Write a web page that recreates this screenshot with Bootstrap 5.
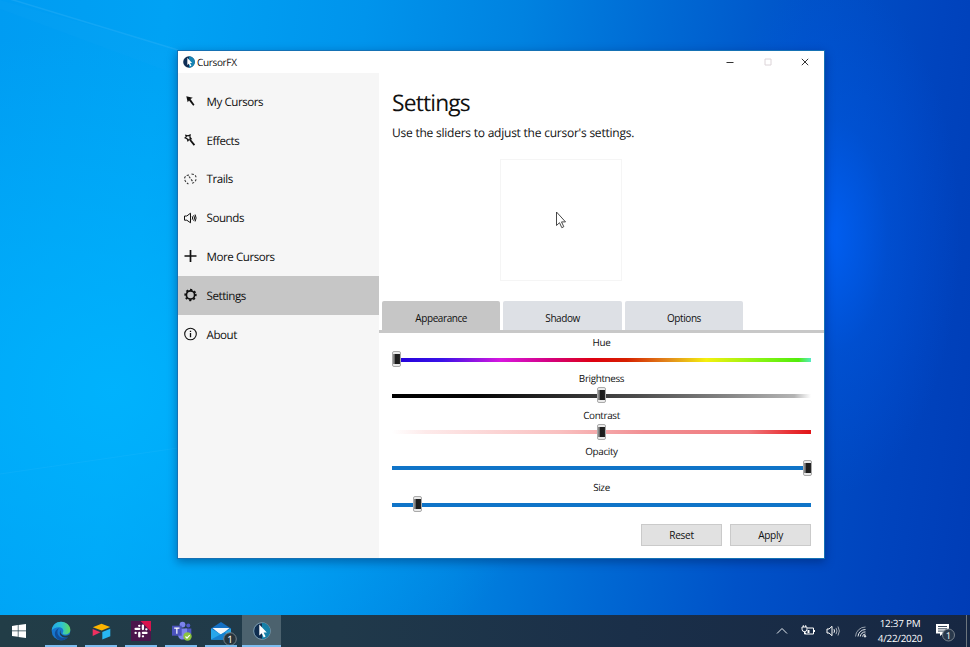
<!DOCTYPE html>
<html lang="en">
<head>
<meta charset="utf-8">
<meta name="viewport" content="width=device-width, initial-scale=1">
<title>CursorFX</title>
<link href="https://cdn.jsdelivr.net/npm/bootstrap@5.3.0/dist/css/bootstrap.min.css" rel="stylesheet">
<style>
body{font-family:"Open Sans","Noto Sans",sans-serif;color:#111;line-height:1.2;text-rendering:geometricPrecision;
background:
radial-gradient(ellipse 130px 260px at 830px 236px,rgba(0,96,246,.9),rgba(0,90,234,.35) 45%,transparent),
radial-gradient(ellipse 460px 360px at 110px 390px,rgba(0,182,255,.8),transparent),
linear-gradient(97deg,#009cf2 0,#00a2f4 16%,#0094ec 35%,#0082e0 50%,#006ad4 63%,#0052c8 77%,#0044be 90%,#003cb6 100%)}
.desktop{height:647px}
.rays{position:absolute;left:0;top:0;z-index:0}
.win{width:648px;height:509px;margin:50px 0 0 177px;border:1px solid #1571b4;box-shadow:0 3px 9px rgba(0,20,70,.4);position:relative;z-index:1}
.titlebar{height:22px;padding-left:5px;font-size:10px;gap:2px}
.titlebar span{letter-spacing:-.34px}
.wbtn{width:37.5px;height:22px}
.side{width:201px;background:#f6f6f6;padding-top:9.3px}
.side .nav-link{height:38.8px;padding:2px 0 0 5px;color:#111;font-size:11.6px;gap:8.5px;letter-spacing:-.45px}
.side .nav-link svg{width:15px;height:15px;flex:none;margin-top:-2px}
.side .nav-link.active{background:#c6c6c6}
.main-head{padding:15px 0 0 13px}
.main-head h1{font-size:22.8px;line-height:28px;font-weight:400;margin:0;letter-spacing:-.83px;padding-top:1px}
.main-head p{font-size:12px;line-height:18px;margin:7px 0 0;letter-spacing:-.23px}
.preview{width:122px;height:122px;border:1px solid #f5f5f5;margin:17px 0 0 121px}
.fx-tabs{margin-top:20px;padding-left:3px;gap:3px;border-bottom:3px solid #c8c8c8}
.fx-tabs .nav-link{width:118.4px;height:29px;padding:5px 0 0;border:0;border-radius:2px 2px 0 0;background:#dde0e5;color:#111;font-size:10px;line-height:24px;letter-spacing:-.42px}
.fx-tabs .nav-link.active{background:#c6c6c6}
.sliders{padding:0 13px}
.srow{height:36.25px;font-size:9.9px;letter-spacing:-.36px}
.srow label{line-height:18px;height:18px}
.strack{height:17px}
.strack i{display:block;height:4px;width:100%}
.thumb{position:absolute;top:0;width:9px;height:16px;border:1px solid #aaa;border-radius:2px;background:linear-gradient(90deg,#999 0,#666 22%,#1b1b1b 36%,#202020 92%,#555 100%) 0 2px/100% 10px no-repeat,#e9e9e9}
.hue{background:linear-gradient(90deg,#2000d8 0,#3a12e8 12%,#d816de 26%,#d4007c 38%,#de0010 48%,#d62000 56%,#e28a1c 66%,#f4f00e 75%,#86f412 88%,#52ec0c 97%,#55ebc5 100%)}
.bri{background:linear-gradient(90deg,#000 0,#050505 20%,#4b4b4b 58%,#858585 80%,#b4b4b4 96%,#fff 100%)}
.con{background:linear-gradient(90deg,#fff 0,#fdeaea 8%,#f9c0c0 40%,#f19094 60%,#f0787c 85%,#e83034 95%,#e01418 100%)}
.solid{background:#0f74c8}
.fx-btn{width:81px;height:22px;padding:0;border:1px solid #cacaca;border-radius:0;background:#e1e1e1;color:#111;font-size:10.1px;line-height:20px;letter-spacing:-.32px}
.actions{padding-top:10px}
.taskbar{height:32px;background:linear-gradient(90deg,#223d47 0,#20394a 35%,#1a2f49 65%,#172742 100%);color:#fff;position:relative;z-index:1}
.tb{height:32px;width:40px;position:relative}
.tb.start{width:41px;padding-right:3px}
.tb.open::after{content:"";position:absolute;left:4px;right:4px;bottom:0;height:2px;background:#7dbdf0}
.tb.current{background:#4c626e;width:39px;margin-left:1px}
.tb.current::after{left:0;right:0}
.tray svg{position:relative;flex:none}
.clock{font-size:9.9px;line-height:15px;width:50px;letter-spacing:-.25px;white-space:nowrap}
</style>
</head>
<body>
<svg class="rays" width="970" height="615" viewBox="0 0 970 615">
<path d="M0 0L178 49V75L0 9V0z" fill="#5cc6ff" opacity=".03"/><path d="M0 -4L178 50" stroke="#7fd0ff" opacity=".14" stroke-width="1.500"/>
<path d="M0 474L178 448" stroke="#7fd8ff" opacity=".07"/>
</svg>
<div class="desktop d-flex flex-column justify-content-between overflow-hidden">
<main class="win bg-white d-flex flex-column">
<header class="titlebar d-flex align-items-center">
<svg width="12" height="12" viewBox="0 0 18 18"><circle cx="9" cy="9" r="8.7" fill="#102e55"/><path d="M9 .3a8.7 8.7 0 010 17.4z" fill="#1684b4"/><path d="M6.5 2.7v10.8l2.3-2 2 4 1.8-.9-2-4h3z" fill="#fff"/></svg>
<span>CursorFX</span>
<div class="d-flex ms-auto">
<div class="wbtn d-flex align-items-center justify-content-center"><svg width="8" height="8"><path d="M.5 4.5h7" stroke="#333"/></svg></div>
<div class="wbtn d-flex align-items-center justify-content-center"><svg width="8" height="8"><path d="M1 1h6v6H1z" fill="none" stroke="#dcd4d8"/></svg></div>
<div class="wbtn d-flex align-items-center justify-content-center"><svg width="8" height="8"><path d="M.8 .8l6.400 6.400M7.200 .8L.8 7.200" stroke="#333"/></svg></div>
</div>
</header>
<div class="d-flex flex-grow-1">
<nav class="side nav flex-column">
<a class="nav-link d-flex align-items-center"><svg viewBox="0 0 15 15"><path d="M3.300 2.200l6.500 1.600-2.300 1.300 4 5.600-1.300 1-4.200-5.300-1.300 1.900z" fill="#111"/></svg>My Cursors</a>
<a class="nav-link d-flex align-items-center"><svg viewBox="0 0 15 15" fill="none" stroke="#111"><path d="M2.800 2.300l2.300.6 2-1-.2 2.300 1.300 1.700-2.100.3-1.200 1.600-.8-2-2-.9 1.200-1z" stroke-width="1.200"/><path d="M6.800 6.500l4.600 5.600" stroke-width="1.800"/></svg>Effects</a>
<a class="nav-link d-flex align-items-center"><svg viewBox="0 0 15 15" fill="none" stroke="#333" stroke-width="1.100"><path d="M6 3C3 3.200 1.300 5 1.600 7s2 4 3.800 5" stroke-dasharray="2.200 1.500"/><path d="M8.500 2c3 .2 4.800 1.600 4.600 4.500s-1.600 4-4 4.800" stroke-dasharray="2.200 1.700"/><path d="M6 4.500l4 5.500" stroke-dasharray="2.200 1.400"/></svg>Trails</a>
<a class="nav-link d-flex align-items-center"><svg viewBox="0 0 15 15" fill="none" stroke="#111" stroke-width="1"><path d="M1.500 5h2.300L7.500 2.200v9.600L3.800 9.200H1.500z"/><path d="M9.200 5.300q1 1.700 0 3.400M10.700 4.200q1.700 2.800 0 5.600M12.100 3.500q2 3.500 0 7"/></svg>Sounds</a>
<a class="nav-link d-flex align-items-center"><svg viewBox="0 0 15 15"><path d="M7.500 1v12M1.500 7h12" stroke="#111" stroke-width="1.700"/></svg>More Cursors</a>
<a class="nav-link active d-flex align-items-center"><svg viewBox="0 0 15 15" fill="none" stroke="#111"><circle cx="7.500" cy="7" r="4.100" stroke-width="1.700"/><circle cx="7.500" cy="7" r="5.300" stroke-width="1.700" stroke-dasharray="2.080 2.080" transform="rotate(-11 7.500 7)"/></svg>Settings</a>
<a class="nav-link d-flex align-items-center"><svg viewBox="0 0 15 15" fill="none" stroke="#111"><circle cx="7.500" cy="7" r="5.800" stroke-width="1.100"/><path d="M7.500 6v4.300M7.500 3.800v1.200" stroke-width="1.300"/></svg>About</a>
</nav>
<section class="flex-grow-1">
<div class="main-head">
<h1>Settings</h1>
<p>Use the sliders to adjust the cursor's settings.</p>
</div>
<div class="preview d-flex align-items-center justify-content-center"><svg width="12" height="18" viewBox="0 0 12 18"><path d="M1.500 1v13.500l3-2.800 2.300 5 2-1-2.300-4.800h4z" fill="#fff" stroke="#333" stroke-width=".9"/></svg></div>
<div class="fx-tabs nav">
<button class="nav-link active">Appearance</button>
<button class="nav-link">Shadow</button>
<button class="nav-link">Options</button>
</div>
<div class="sliders">
<div class="srow text-center"><label class="d-block">Hue</label><div class="strack position-relative d-flex align-items-center"><i class="hue"></i><b class="thumb" style="left:0%"></b></div></div>
<div class="srow text-center"><label class="d-block">Brightness</label><div class="strack position-relative d-flex align-items-center"><i class="bri"></i><b class="thumb" style="left:48.900%"></b></div></div>
<div class="srow text-center"><label class="d-block">Contrast</label><div class="strack position-relative d-flex align-items-center"><i class="con"></i><b class="thumb" style="left:48.900%"></b></div></div>
<div class="srow text-center"><label class="d-block">Opacity</label><div class="strack position-relative d-flex align-items-center"><i class="solid"></i><b class="thumb" style="left:98%"></b></div></div>
<div class="srow text-center"><label class="d-block">Size</label><div class="strack position-relative d-flex align-items-center"><i class="solid"></i><b class="thumb" style="left:4.900%"></b></div></div>
<div class="actions d-flex justify-content-end gap-2"><button class="btn fx-btn">Reset</button><button class="btn fx-btn">Apply</button></div>
</div>
</section>
</div>
</main>
<footer class="taskbar d-flex">
<div class="tb start d-flex align-items-center justify-content-center"><svg width="14" height="14" viewBox="0 0 14 14" fill="#fff"><path d="M0 2l5.800-.9v5.500H0zM6.500 1L14 0v6.600H6.500zM0 7.300h5.800v5.500L0 12zM6.500 7.300H14V14l-7.500-1z"/></svg></div>
<div class="tb open d-flex align-items-center justify-content-center"><svg width="20" height="20" viewBox="0 0 20 20"><defs><linearGradient id="ea" x1="0" x2="1"><stop stop-color="#22a7e8"/><stop offset=".55" stop-color="#2fc4cf"/><stop offset="1" stop-color="#62dc58"/></linearGradient></defs><circle cx="10" cy="10" r="9.300" fill="#1676cf"/><path d="M.7 9.500C1.300 4 5.200.7 10 .7c5.600 0 9.300 4 9.300 8 0 3.200-2.400 4.700-5 4.700-2 0-3.200-.7-2.700-1.500 1.800-2.200.3-5.400-3-5.700C5 6 1.800 7.500.7 9.500z" fill="url(#ea)"/><path d="M8 7.200c-3 3-1.500 8.500 3 9.500 2.300.5 4.700-.3 6.600-1.300-2 3-5.400 4.200-8.600 3.900C4.500 18 3 13 4.300 10.500 5.200 8.700 6.500 7.700 8 7.200z" fill="#124d98"/><path d="M10 8.800c-1 1.500-.9 4 1.400 5.200 2.200 1.200 4.800.7 7-.6l1.500 1.100-2 1.400C14 17.800 9 15.500 8.800 12.200c0-1.500.4-2.600 1.200-3.400z" fill="#213c49"/></svg></div>
<div class="tb open d-flex align-items-center justify-content-center"><svg width="19" height="17" viewBox="0 0 19 17"><path d="M.8 4.300L9.500.8l8.700 3.300-8.500 3.500z" fill="#fcb400"/><path d="M10.300 9l8-3.200v7.500l-8 3.200z" fill="#28b7f2"/><path d="M.7 6l7.800 3.300L.7 13z" fill="#ee3060"/></svg></div>
<div class="tb open d-flex align-items-center justify-content-center"><svg width="20" height="20" viewBox="0 0 20 20"><path d="M0 0h20v20H0z" fill="#4b154b"/><path d="M9.500 0H20v10.500z" fill="#d9144d"/><g stroke="#fff" stroke-width="2.300" stroke-linecap="round"><path d="M8.300 4.800h-.1M8.300 7.900H4.600M11.900 4.600v3.500M15.300 8.300h.1M4.600 11.900h.1M8.300 11.900v3.500M11.900 11.900h3.600M11.900 15.300h.1"/></g></svg></div>
<div class="tb open d-flex align-items-center justify-content-center"><svg width="21" height="20" viewBox="0 0 21 20"><circle cx="11.500" cy="3.600" r="2.900" fill="#7b83eb"/><circle cx="17.300" cy="4.500" r="2" fill="#5059c9"/><path d="M14 7.500h6.300v5c0 3-2 4.500-5 4z" fill="#5059c9"/><path d="M7 7.500h9v6c0 3-2 5-4.500 5s-4.500-2-4.500-5z" fill="#7b83eb"/><path d="M1 4.700h9.700v10H1z" fill="#4b53bc"/><path d="M3.200 7.200h5.300M5.850 7.200v5.500" stroke="#fff" stroke-width="1.200"/><circle cx="16.500" cy="15.500" r="4.200" fill="#8bc340"/><path d="M14.500 15.500l1.500 1.600 2.700-3" fill="none" stroke="#fff" stroke-width="1.100"/></svg></div>
<div class="tb open d-flex align-items-center"><svg class="flex-shrink-0" width="34" height="22" viewBox="0 0 34 22"><path d="M10 8.500L20 2l10 6.500v11H10z" fill="#1470c4"/><path d="M11.500 8h17L20 15z" fill="#f3f7fb"/><path d="M10 8.500l10 6 10-6v11H10z" fill="#28a7ea"/><path d="M10 19.500L24 12l6 7.500z" fill="#1681d0"/></svg><svg style="margin-left:-12px" width="14" height="14" viewBox="0 0 14 14" class="mt-3 flex-shrink-0"><circle cx="7" cy="7" r="6.300" fill="#27343c" stroke="#758189"/><text x="7" y="10.500" text-anchor="middle" font-size="10" fill="#fff">1</text></svg></div>
<div class="tb open current d-flex align-items-center justify-content-center"><svg width="18" height="18" viewBox="0 0 18 18"><circle cx="9" cy="9" r="8.300" fill="#102e50" stroke="#8fb3c6" stroke-width=".8"/><path d="M9 .8a8.200 8.200 0 010 16.400z" fill="#1780a8"/><path d="M6.300 2.500v11l2.500-2.200 1.900 4.200 1.900-.9-2-4h3.200z" fill="#fff"/></svg></div>
<div class="tray d-flex align-items-center ms-auto">
<svg width="12" height="8" viewBox="0 0 12 8"><path d="M1 6.500L6 1.500l5 5" fill="none" stroke="#e8edf2"/></svg>
<svg style="margin:0 11px 0 13px" width="14" height="12" viewBox="0 0 14 12" fill="none" stroke="#fff"><path d="M6.500 3h6v6H4.500V7.500M13.500 5v2"/><path d="M1 2h5v2.200a2.500 2.500 0 01-5 0zM2.300.2V2M4.700.2V2M3.500 6.500V9h1"/><path d="M6.500 5h2v3h-2z" fill="#fff" stroke="none"/></svg>
<svg width="15" height="12" viewBox="0 0 15 12" fill="none" stroke="#fff"><path d="M1 4h2l3-2.700v9.400L3 8H1z"/><path d="M8 4.200q1 1.800 0 3.600"/><path d="M10 2.900q2 3.100 0 6.200M12 1.500q2.700 4.500 0 9" opacity=".6"/></svg>
<svg style="margin-left:13px" width="13" height="13" viewBox="0 0 13 13" fill="none" stroke="#e7ebef"><path d="M1.500 11.500A10 10 0 0111.500 2" opacity=".6"/><path d="M4 11.500A7.500 7.500 0 0111.500 4.500M6.300 11.500a5 5 0 015.200-4.600M8.500 11.500a3 3 0 013-2.500"/><circle cx="11" cy="11.300" r=".8" fill="#fff"/></svg>
<div class="clock text-center ms-2">12:37 PM<br>4/22/2020</div>
<svg style="margin-left:10px;margin-right:1px" width="22" height="22" viewBox="0 0 22 22"><path d="M1 4h13v9.500H8L5 16v-2.500H1z" fill="#fff"/><path d="M3 6.500h9M3 8.800h9M3 11.100h6" stroke="#22344b" stroke-width=".9"/><circle cx="13.500" cy="15" r="6" fill="#29384b" stroke="#77818c"/><text x="13.500" y="18.500" text-anchor="middle" font-size="9.500" fill="#fff">1</text></svg>
<div class="border-start border-secondary h-100" style="margin-left:8px;width:4px"></div>
</div>
</footer>
</div>
<script src="https://cdn.jsdelivr.net/npm/bootstrap@5.3.0/dist/js/bootstrap.bundle.min.js"></script>
</body>
</html>
